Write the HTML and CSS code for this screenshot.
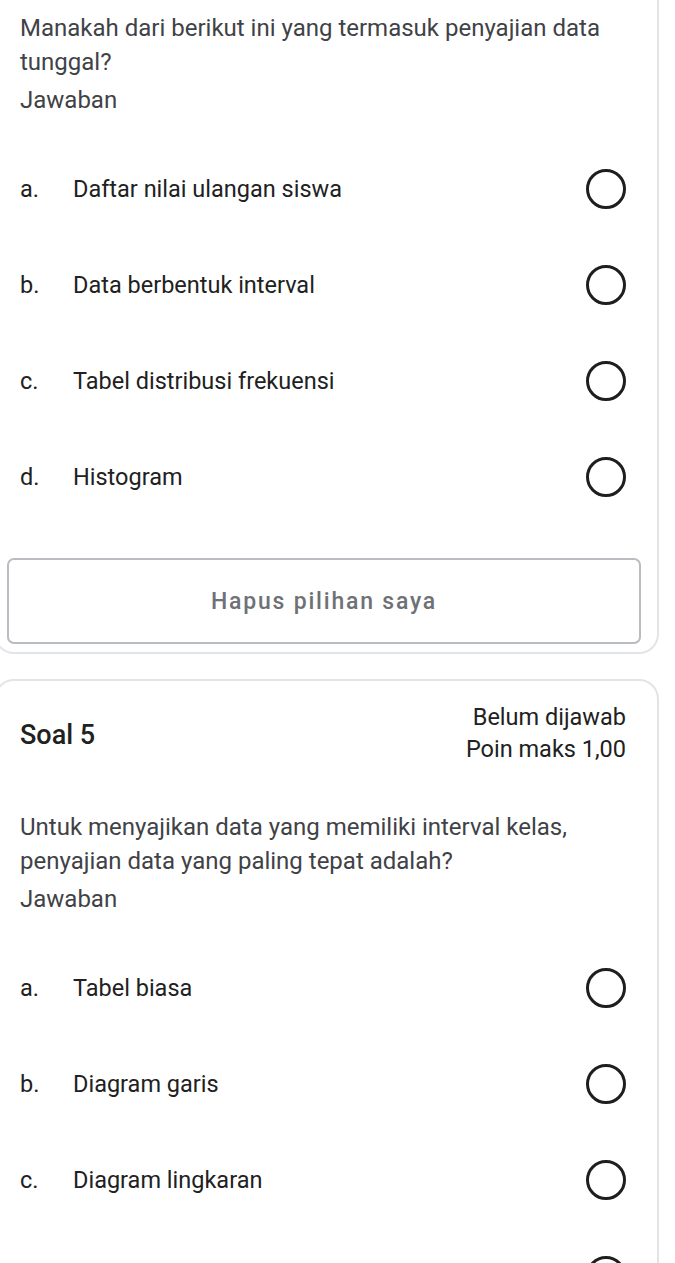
FILE: index.html
```html
<!DOCTYPE html>
<html lang="id">
<head>
    <meta charset="UTF-8">
    <meta name="viewport" content="width=device-width, initial-scale=1.0">
    <title>Kuis</title>
    <link rel="stylesheet" href="styles.css">
</head>
<body>
    <div class="quiz">
        <!-- Soal 4 (bagian bawah) -->
        <div class="card card-cut">
            <p class="question">Manakah dari berikut ini yang termasuk penyajian data tunggal?</p>
            <p class="answer-label">Jawaban</p>
            <div class="options">
                <label class="option">
                    <span class="letter">a.</span>
                    <span class="option-text">Daftar nilai ulangan siswa</span>
                    <span class="radio"><svg viewBox="0 0 40 40"><circle cx="20" cy="20" r="18.5"/></svg></span>
                </label>
                <label class="option">
                    <span class="letter">b.</span>
                    <span class="option-text">Data berbentuk interval</span>
                    <span class="radio"><svg viewBox="0 0 40 40"><circle cx="20" cy="20" r="18.5"/></svg></span>
                </label>
                <label class="option">
                    <span class="letter">c.</span>
                    <span class="option-text">Tabel distribusi frekuensi</span>
                    <span class="radio"><svg viewBox="0 0 40 40"><circle cx="20" cy="20" r="18.5"/></svg></span>
                </label>
                <label class="option">
                    <span class="letter">d.</span>
                    <span class="option-text">Histogram</span>
                    <span class="radio"><svg viewBox="0 0 40 40"><circle cx="20" cy="20" r="18.5"/></svg></span>
                </label>
            </div>
            <button class="clear-btn" type="button">Hapus pilihan saya</button>
        </div>

        <!-- Soal 5 -->
        <div class="card">
            <div class="card-header">
                <h2>Soal 5</h2>
                <div class="status">
                    <div>Belum dijawab</div>
                    <div>Poin maks 1,00</div>
                </div>
            </div>
            <p class="question">Untuk menyajikan data yang memiliki interval kelas, penyajian data yang paling tepat adalah?</p>
            <p class="answer-label">Jawaban</p>
            <div class="options">
                <label class="option">
                    <span class="letter">a.</span>
                    <span class="option-text">Tabel biasa</span>
                    <span class="radio"><svg viewBox="0 0 40 40"><circle cx="20" cy="20" r="18.5"/></svg></span>
                </label>
                <label class="option">
                    <span class="letter">b.</span>
                    <span class="option-text">Diagram garis</span>
                    <span class="radio"><svg viewBox="0 0 40 40"><circle cx="20" cy="20" r="18.5"/></svg></span>
                </label>
                <label class="option">
                    <span class="letter">c.</span>
                    <span class="option-text">Diagram lingkaran</span>
                    <span class="radio"><svg viewBox="0 0 40 40"><circle cx="20" cy="20" r="18.5"/></svg></span>
                </label>
                <label class="option">
                    <span class="letter">d.</span>
                    <span class="option-text">Histogram</span>
                    <span class="radio"><svg viewBox="0 0 40 40"><circle cx="20" cy="20" r="18.5"/></svg></span>
                </label>
            </div>
        </div>
    </div>
</body>
</html>
```

FILE: styles.css
```css
:root {
    --text: #212121;
    --text-soft: #3f4246;
    --border: #e2e4e7;
    --btn-border: #b9bcc1;
    --btn-text: #6e7175;
}

* {
    margin: 0;
    padding: 0;
    box-sizing: border-box;
}

body {
    background-color: white;
    font-family: Roboto, "Noto Sans", sans-serif;
    color: var(--text);
    overflow: hidden;
}

.quiz {
    display: flex;
    flex-direction: column;
    gap: 25px;
    margin-left: -6px;
    width: 665px;
}

.card {
    border: 2px solid var(--border);
    border-radius: 20px;
    padding: 0 16px 8px 11px;
}

.card-cut {
    border-top: none;
    border-radius: 0 0 20px 20px;
    padding-top: 11px;
}

.card-header {
    display: flex;
    justify-content: space-between;
    align-items: center;
    padding: 20px 15px 0 13px;
    margin-bottom: 45px;
}

.card-header h2 {
    font-size: 27px;
    font-weight: 500;
    padding-top: 4px;
}

.status {
    text-align: right;
    font-size: 23.5px;
    line-height: 32px;
}

.question {
    padding: 0 15px 0 13px;
    font-size: 24px;
    line-height: 34px;
    color: var(--text-soft);
    margin-bottom: 4px;
}

.answer-label {
    padding: 0 13px;
    font-size: 24px;
    line-height: 34px;
    color: var(--text-soft);
    margin-bottom: 24px;
}

.option {
    display: flex;
    align-items: center;
    height: 96px;
    padding: 0 15px 0 13px;
    font-size: 23.5px;
    cursor: pointer;
}

.letter {
    width: 53px;
    flex-shrink: 0;
}

.option-text {
    flex: 1;
}

.radio svg {
    display: block;
    width: 40px;
    height: 40px;
}

.radio circle {
    fill: none;
    stroke: #1e1e1e;
    stroke-width: 3;
}

.clear-btn {
    display: block;
    width: 100%;
    height: 86px;
    margin-top: 33px;
    background: white;
    border: 2px solid var(--btn-border);
    border-radius: 7px;
    font-family: Roboto, sans-serif;
    font-size: 23px;
    font-weight: 500;
    letter-spacing: 1.8px;
    color: var(--btn-text);
    cursor: pointer;
}
```
